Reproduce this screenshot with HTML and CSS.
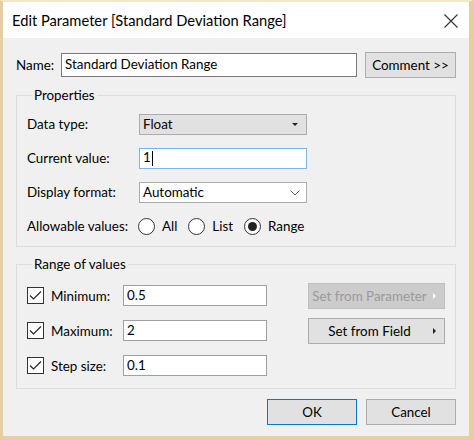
FILE: index.html
```html
<!DOCTYPE html>
<html>
<head>
<meta charset="utf-8">
<link rel="stylesheet" href="styles.css">
</head>
<body>
<div class="window">
  <div class="titlebar">
    <span class="title">Edit Parameter [Standard Deviation Range]</span>
    <svg class="close" width="14" height="14" viewBox="0 0 14 14"><path d="M0.5 0.5 L13.5 13.5 M13.5 0.5 L0.5 13.5" stroke="#333" stroke-width="1.1" fill="none"/></svg>
  </div>
  <div class="content">
    <div class="name-row">
      <span class="name-label">Name:</span>
      <div class="field name-field">Standard Deviation Range</div>
      <div class="btn comment-btn">Comment &gt;&gt;</div>
    </div>

    <fieldset class="group props">
      <legend>Properties</legend>
      <div class="prow">
        <span class="plabel">Data type:</span>
        <div class="select gray">Float<span class="tri"></span></div>
      </div>
      <div class="prow">
        <span class="plabel">Current value:</span>
        <div class="field wide focus">1<span class="caret"></span></div>
      </div>
      <div class="prow">
        <span class="plabel">Display format:</span>
        <div class="select white">Automatic
          <svg class="chev" width="10" height="6" viewBox="0 0 10 6"><path d="M0.5 0.5 L5 5 L9.5 0.5" stroke="#555" stroke-width="1" fill="none"/></svg>
        </div>
      </div>
      <div class="prow">
        <span class="plabel">Allowable values:</span>
        <div class="radios">
          <span class="radio"></span><span class="rtext">All</span>
          <span class="radio"></span><span class="rtext">List</span>
          <span class="radio on"><span class="dot"></span></span><span class="rtext">Range</span>
        </div>
      </div>
    </fieldset>

    <fieldset class="group range">
      <legend>Range of values</legend>
      <div class="range-body">
        <div class="rcol">
          <div class="rrow">
            <span class="check"><svg width="13" height="11" viewBox="0 0 13 11"><path d="M1 5.5 L4.5 9 L12 1.5" stroke="#222" stroke-width="1.1" fill="none"/></svg></span>
            <span class="rlabel">Minimum:</span>
            <div class="field small">0.5</div>
          </div>
          <div class="rrow">
            <span class="check"><svg width="13" height="11" viewBox="0 0 13 11"><path d="M1 5.5 L4.5 9 L12 1.5" stroke="#222" stroke-width="1.1" fill="none"/></svg></span>
            <span class="rlabel">Maximum:</span>
            <div class="field small">2</div>
          </div>
          <div class="rrow">
            <span class="check"><svg width="13" height="11" viewBox="0 0 13 11"><path d="M1 5.5 L4.5 9 L12 1.5" stroke="#222" stroke-width="1.1" fill="none"/></svg></span>
            <span class="rlabel">Step size:</span>
            <div class="field small">0.1</div>
          </div>
        </div>
        <div class="bcol">
          <div class="btn side disabled">Set from Parameter<span class="mtri"></span></div>
          <div class="btn side">Set from Field<span class="mtri"></span></div>
        </div>
      </div>
    </fieldset>

    <div class="footer">
      <div class="btn foot ok">OK</div>
      <div class="btn foot">Cancel</div>
    </div>
  </div>
</div>
</body>
</html>
```
FILE: styles.css
```css
* { box-sizing: border-box; }
html, body { margin: 0; padding: 0; }
body {
  font-family: Lato, "Open Sans", sans-serif;
  font-size: 13.4px;
  color: #000;
  background: #e8d2a8;
}
.window {
  width: 474px;
  height: 440px;
  background: #f0f0f0;
  border-top: 2px solid #f3e6cc;
  border-left: 3px solid #e6cf9f;
  border-right: 5px solid #e6cf9f;
  border-bottom: 4px solid #e6cf9f;
  display: flex;
  flex-direction: column;
}
.titlebar {
  height: 36px;
  background: #fff;
  display: flex;
  align-items: center;
  padding-left: 9px;
  padding-right: 11px;
  flex: none;
}
.title { font-size: 14.7px; color: #000; flex: 1; }
.close { flex: none; margin-top: 2px; }
.content {
  padding: 14px 13px 0 13px;
  display: flex;
  flex-direction: column;
}
.name-row {
  display: flex;
  align-items: center;
  height: 26px;
}
.name-label { width: 45px; }
.field {
  background: #fff;
  border: 1px solid #a0a0a0;
  display: flex;
  align-items: center;
  padding-left: 3px;
  height: 21px;
  line-height: 1;
  white-space: nowrap;
}
.name-field { width: 296px; height: 24px; border-color: #7a7a7a; }
.btn {
  background: #e1e1e1;
  border: 1px solid #adadad;
  display: flex;
  align-items: center;
  justify-content: center;
  position: relative;
  white-space: nowrap;
}
.comment-btn { width: 91px; height: 26px; margin-left: 8px; }

.group {
  margin: 0;
  border: 1px solid #dcdcdc;
  padding: 0 0 0 10px;
  min-width: 0;
}
.group legend {
  padding: 0 2px;
  margin-left: 5px;
  line-height: 19px;
}
.props { margin-top: 8px; padding-top: 8px; padding-bottom: 9px; }
.prow {
  display: flex;
  align-items: center;
  height: 22px;
  margin-bottom: 12px;
}
.prow:last-child { margin-bottom: 0; }
.plabel { width: 112px; white-space: nowrap; }
.select {
  width: 168px;
  height: 21px;
  border: 1px solid #acacac;
  display: flex;
  align-items: center;
  padding-left: 3px;
  position: relative;
}
.select.gray { background: #e1e1e1; }
.select.white { background: #fff; }
.tri {
  position: absolute;
  right: 8px;
  top: 8px;
  border-left: 3px solid transparent;
  border-right: 3px solid transparent;
  border-top: 3px solid #222;
}
.chev { position: absolute; right: 6px; top: 7px; }
.wide { width: 168px; }
.focus { border-color: #7eb4ea; }
.caret { display: inline-block; width: 1px; height: 15px; background: #000; margin-left: 1px; }
.radios { display: flex; align-items: center; margin-left: -1px; }
.radio {
  width: 17px; height: 17px;
  border: 1px solid #333;
  border-radius: 50%;
  background: #fff;
  display: flex;
  align-items: center;
  justify-content: center;
}
.dot { width: 9px; height: 9px; border-radius: 50%; background: #222; }
.rtext { margin-left: 7px; margin-right: 11px; }

.range { margin-top: 8px; padding-top: 11px; padding-bottom: 12px; }
.range-body { display: flex; }
.rcol { display: flex; flex-direction: column; }
.rrow {
  display: flex;
  align-items: center;
  height: 21px;
  margin-bottom: 14px;
}
.rrow:last-child { margin-bottom: 0; }
.check {
  width: 17px; height: 17px;
  border: 1px solid #333;
  background: #fff;
  display: flex;
  align-items: center;
  justify-content: center;
}
.rlabel { margin-left: 7px; width: 72px; }
.small { width: 144px; }
.bcol { display: flex; flex-direction: column; margin-left: 41px; margin-top: -2px; }
.side { width: 137px; height: 26px; margin-bottom: 9px; padding-right: 14px; }
.side.disabled { background: #cccccc; border-color: #bfbfbf; color: #9a9a9a; }
.mtri {
  position: absolute;
  right: 8px;
  top: 9px;
  border-top: 3px solid transparent;
  border-bottom: 3px solid transparent;
  border-left: 3px solid #222;
}
.disabled .mtri { border-left-color: #fff; }
.footer {
  display: flex;
  justify-content: flex-end;
  margin-top: 10px;
}
.foot { width: 90px; height: 26px; margin-left: 9px; }
.ok { border-color: #0078d7; }
```
